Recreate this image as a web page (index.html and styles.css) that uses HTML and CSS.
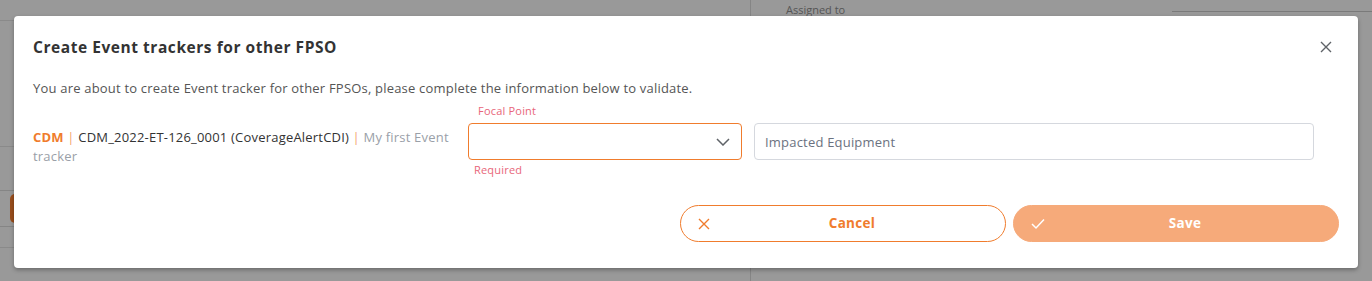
FILE: index.html
```html
<!DOCTYPE html>
<html lang="en">
<head>
    <meta charset="UTF-8">
    <meta name="viewport" content="width=device-width, initial-scale=1.0">
    <title>Create Event trackers for other FPSO</title>
    <link rel="stylesheet" href="styles.css">
</head>
<body>
    <div class="page">
        <div class="page-left">
            <div class="page-rule first"></div>
            <div class="page-rule second"></div>
            <div class="page-btn"><span></span></div>
            <div class="page-rule third"></div>
        </div>
        <div class="page-right">
            <div class="page-head">
                <span class="assigned">Assigned to</span>
                <span class="assigned-line"></span>
            </div>
        </div>
    </div>

    <div class="modal">
        <div class="modal-header">
            <h2>Create Event trackers for other FPSO</h2>
            <button class="close-btn" aria-label="Close">
                <svg width="12" height="12" viewBox="0 0 12 12"><path d="M1 1l10 10M11 1L1 11" stroke="#5f6368" stroke-width="1.4" fill="none"/></svg>
            </button>
        </div>
        <p class="intro">You are about to create Event tracker for other FPSOs, please complete the information below to validate.</p>

        <div class="form-row">
            <div class="tracker-info">
                <span class="site">CDM</span> <span class="sep">|</span> <span class="code">CDM_2022-ET-126_0001 (CoverageAlertCDI)</span> <span class="sep">|</span> <span class="name">My first Event tracker</span>
            </div>
            <div class="field">
                <label class="field-label">Focal Point</label>
                <div class="select invalid">
                    <svg width="14" height="8" viewBox="0 0 14 8"><path d="M1 1l6 6 6-6" stroke="#5f6368" stroke-width="1.5" fill="none"/></svg>
                </div>
                <div class="field-error">Required</div>
            </div>
            <div class="field">
                <div class="field-label"></div>
                <input class="text-input" type="text" placeholder="Impacted Equipment">
            </div>
        </div>

        <div class="actions">
            <button class="btn btn-cancel">
                <svg width="12" height="12" viewBox="0 0 12 12"><path d="M1 1l10 10M11 1L1 11" stroke="#f07c2d" stroke-width="1.4" fill="none"/></svg>
                <span>Cancel</span>
            </button>
            <button class="btn btn-save">
                <svg width="14" height="11" viewBox="0 0 14 11"><path d="M1 5.5l4 4 8-8.5" stroke="#fff" stroke-width="1.5" fill="none"/></svg>
                <span>Save</span>
            </button>
        </div>
    </div>
</body>
</html>
```

FILE: styles.css
```css
body {
    margin: 0;
    height: 281px;
    overflow: hidden;
    background-color: #999999;
    font-family: "Open Sans", Arial, sans-serif;
}

/* page under the overlay */
.page {
    display: grid;
    grid-template-columns: 751px 1fr;
    height: 281px;
}

.page-left {
    display: flex;
    flex-direction: column;
    border-right: 1px solid #858585;
}

.page-rule {
    border-top: 1px solid #8a8a8a;
}

.page-rule.first {
    margin-top: 20px;
}

.page-rule.second {
    margin-top: 125px;
}

.page-btn {
    margin-top: 43px;
    width: 40px;
    height: 37px;
    margin-left: -10px;
    border: 1px solid #858585;
    border-radius: 5px;
    display: flex;
    align-items: stretch;
    padding: 3px 0 3px 19px;
    box-sizing: border-box;
}

.page-btn span {
    width: 12px;
    background: #9a4e1c;
    border-radius: 5px 0 0 5px;
}

.page-rule.third {
    margin-top: 20px;
}

.page-head {
    display: flex;
    align-items: flex-start;
}

.assigned {
    margin-left: 35px;
    font-size: 11px;
    line-height: 20px;
    color: #555;
}

.assigned-line {
    margin-left: auto;
    margin-top: 11px;
    width: 200px;
    border-top: 1px solid #7a7a7a;
}

/* modal */
.modal {
    position: absolute;
    left: 14px;
    top: 16px;
    width: 1344px;
    height: 252px;
    box-sizing: border-box;
    padding: 21px 19px 26px;
    background: #fff;
    border-radius: 4px;
    box-shadow: 0 2px 4px rgba(0, 0, 0, 0.3);
    letter-spacing: 0.2px;
}

.modal-header {
    display: flex;
    align-items: center;
    justify-content: space-between;
}

.modal-header h2 {
    margin: 0;
    font-size: 15.5px;
    line-height: 20px;
    font-weight: 700;
    letter-spacing: 0.55px;
    color: #333;
}

.close-btn {
    border: 0;
    background: none;
    padding: 0;
    margin-right: 7px;
    display: flex;
}

.intro {
    margin: 22px 0 0;
    font-size: 13px;
    line-height: 18px;
    color: #555;
}

.form-row {
    display: grid;
    grid-template-columns: 423px 274px 560px;
    column-gap: 12px;
    margin-top: 7px;
}

.tracker-info {
    padding-top: 24px;
    font-size: 13px;
    line-height: 19px;
    color: #333;
}

.site {
    color: #f07c2d;
    font-weight: 700;
}

.sep {
    color: #f3a46e;
}

.name {
    color: #9aa0a8;
}

.field-label {
    display: block;
    height: 14px;
    padding-left: 10px;
    font-size: 11px;
    line-height: 14px;
    color: #e8667a;
    margin-bottom: 5px;
}

.select {
    height: 37px;
    box-sizing: border-box;
    border: 1px solid #d5d8de;
    border-radius: 4px;
    display: flex;
    align-items: center;
    justify-content: flex-end;
    padding-right: 11px;
}

.select.invalid {
    border-color: #f07c2d;
}

.field-error {
    margin-top: 3px;
    padding-left: 6px;
    font-size: 11px;
    line-height: 14px;
    color: #e8667a;
}

.text-input {
    display: block;
    width: 100%;
    height: 37px;
    box-sizing: border-box;
    border: 1px solid #d5d8de;
    border-radius: 4px;
    padding: 0 10px;
    font-family: inherit;
    font-size: 13px;
    letter-spacing: 0.2px;
    color: #333;
}

.text-input::placeholder {
    color: #6b7280;
}

.actions {
    display: flex;
    justify-content: flex-end;
    gap: 7px;
    margin-top: 28px;
}

.btn {
    position: relative;
    width: 326px;
    height: 37px;
    border-radius: 19px;
    font-family: inherit;
    font-size: 13.5px;
    font-weight: 700;
    letter-spacing: 0.3px;
    display: flex;
    align-items: center;
    justify-content: center;
    box-sizing: border-box;
    padding: 0 0 1px 18px;
}

.btn svg {
    position: absolute;
    left: 17px;
    top: 50%;
    transform: translateY(-50%);
}

.btn-cancel {
    background: #fff;
    border: 1px solid #f07c2d;
    color: #f07c2d;
}

.btn-save {
    background: #f6aa7a;
    border: 1px solid #f6aa7a;
    color: #fff;
}
```
